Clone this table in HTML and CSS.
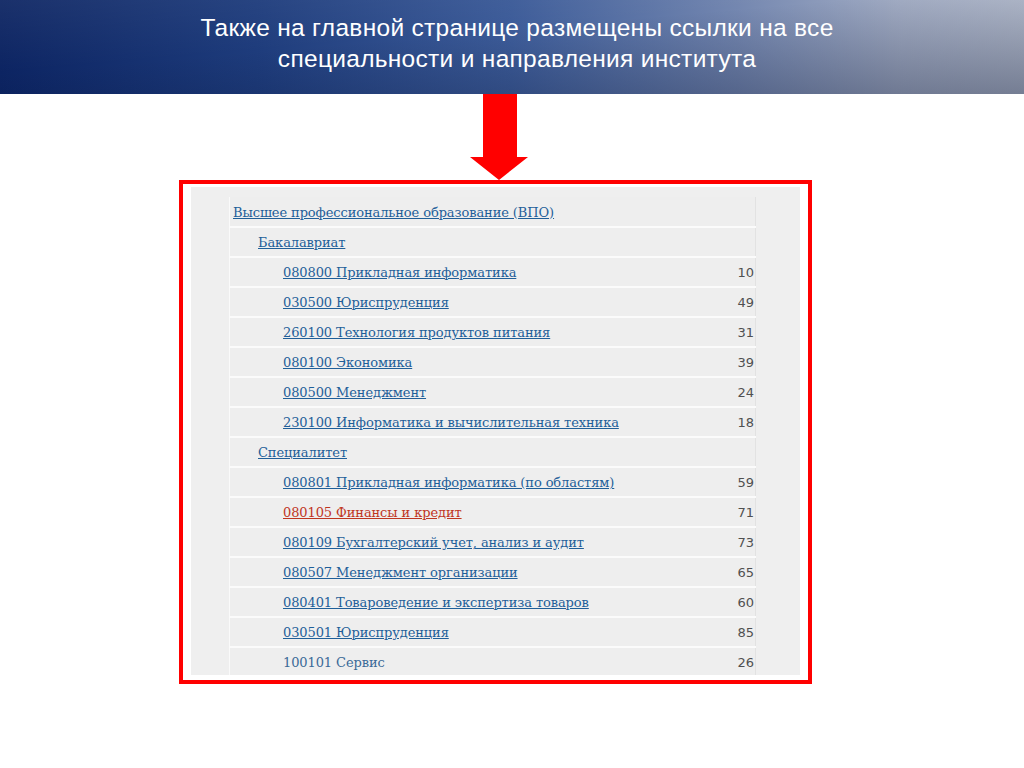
FILE: index.html
```html
<!DOCTYPE html>
<html lang="ru">
<head>
<meta charset="utf-8">
<title>Специальности и направления</title>
<link rel="stylesheet" href="styles.css">
</head>
<body>
<header class="banner">
  <h1 class="banner-title">Также на главной странице размещены ссылки на все<br>специальности и направления института</h1>
</header>
<main class="stage">
  <div class="callout">
    <svg class="arrow" width="58" height="86" viewBox="0 0 58 86" aria-hidden="true">
      <polygon points="13,0 47,0 47,63 58,63 29,86 0,63 13,63" fill="#f00"/>
    </svg>
    <section class="frame">
      <div class="panel">
        <table class="spec">
          <tbody>
            <tr><td class="l0"><a href="#">Высшее профессиональное образование (ВПО)</a></td><td class="num"></td></tr>
            <tr><td class="l1"><a href="#">Бакалавриат</a></td><td class="num"></td></tr>
            <tr><td class="l2"><a href="#">080800 Прикладная информатика</a></td><td class="num">10</td></tr>
            <tr><td class="l2"><a href="#">030500 Юриспруденция</a></td><td class="num">49</td></tr>
            <tr><td class="l2"><a href="#">260100 Технология продуктов питания</a></td><td class="num">31</td></tr>
            <tr><td class="l2"><a href="#">080100 Экономика</a></td><td class="num">39</td></tr>
            <tr><td class="l2"><a href="#">080500 Менеджмент</a></td><td class="num">24</td></tr>
            <tr><td class="l2"><a href="#">230100 Информатика и вычислительная техника</a></td><td class="num">18</td></tr>
            <tr><td class="l1"><a href="#">Специалитет</a></td><td class="num"></td></tr>
            <tr><td class="l2"><a href="#">080801 Прикладная информатика (по областям)</a></td><td class="num">59</td></tr>
            <tr><td class="l2"><a href="#" class="active">080105 Финансы и кредит</a></td><td class="num">71</td></tr>
            <tr><td class="l2"><a href="#">080109 Бухгалтерский учет, анализ и аудит</a></td><td class="num">73</td></tr>
            <tr><td class="l2"><a href="#">080507 Менеджмент организации</a></td><td class="num">65</td></tr>
            <tr><td class="l2"><a href="#">080401 Товароведение и экспертиза товаров</a></td><td class="num">60</td></tr>
            <tr><td class="l2"><a href="#">030501 Юриспруденция</a></td><td class="num">85</td></tr>
            <tr><td class="l2"><a href="#" class="plain">100101 Сервис</a></td><td class="num">26</td></tr>
          </tbody>
        </table>
      </div>
    </section>
  </div>
</main>
</body>
</html>
```
FILE: styles.css
```css
html, body {
  margin: 0;
  padding: 0;
  background: #ffffff;
}

.banner {
  height: 94px;
  background:
    linear-gradient(175deg, rgba(255,255,255,0.06) 0%, rgba(255,255,255,0) 40%, rgba(0,10,40,0.35) 100%),
    linear-gradient(90deg, #0c2462 0%, #1e3c7c 25%, #3d5c99 50%, #7487b0 72%, #a3adc4 88%, #b4bccd 100%);
  display: flex;
  justify-content: center;
  align-items: flex-start;
}

.banner-title {
  margin: 12px 0 0 10px;
  font-family: "Liberation Sans", Arial, sans-serif;
  font-weight: normal;
  font-size: 24.5px;
  line-height: 31px;
  letter-spacing: 0.3px;
  color: #ffffff;
  text-align: center;
}

.stage {
  padding-left: 179px;
}

.callout {
  width: 633px;
  display: flex;
  flex-direction: column;
}

.arrow {
  display: block;
  margin-left: 291px;
}

.frame {
  border: 4px solid #ff0000;
  padding: 3px 8px 5px 8px;
  background: #ffffff;
}

.panel {
  background: #efefef;
  height: 488px;
  overflow: hidden;
  padding: 10px 0 0 38px;
  box-sizing: border-box;
}

.spec {
  width: 527px;
  border-collapse: collapse;
  border-left: 1px solid #fafafa;
  border-right: 1px solid #e2e2e2;
}

.spec tr {
  height: 30px;
  border-bottom: 2px solid #fbfbfb;
}

.spec td {
  padding: 0;
  vertical-align: middle;
  background: #eeeeee;
}

.spec a {
  font-family: "DejaVu Serif", Georgia, serif;
  font-size: 13px;
  color: #1f5f99;
  text-decoration: underline;
  letter-spacing: -0.1px;
}

.spec a.active {
  color: #c0351f;
}

.spec a.plain {
  color: #3b6a98;
  text-decoration: none;
}

.l0 { padding-left: 3px !important; }
.l1 { padding-left: 28px !important; }
.l2 { padding-left: 53px !important; }

.num {
  width: 60px;
  text-align: right;
  padding-right: 1px !important;
  font-family: "DejaVu Sans", Verdana, sans-serif;
  font-size: 13px;
  color: #505050;
}
```
